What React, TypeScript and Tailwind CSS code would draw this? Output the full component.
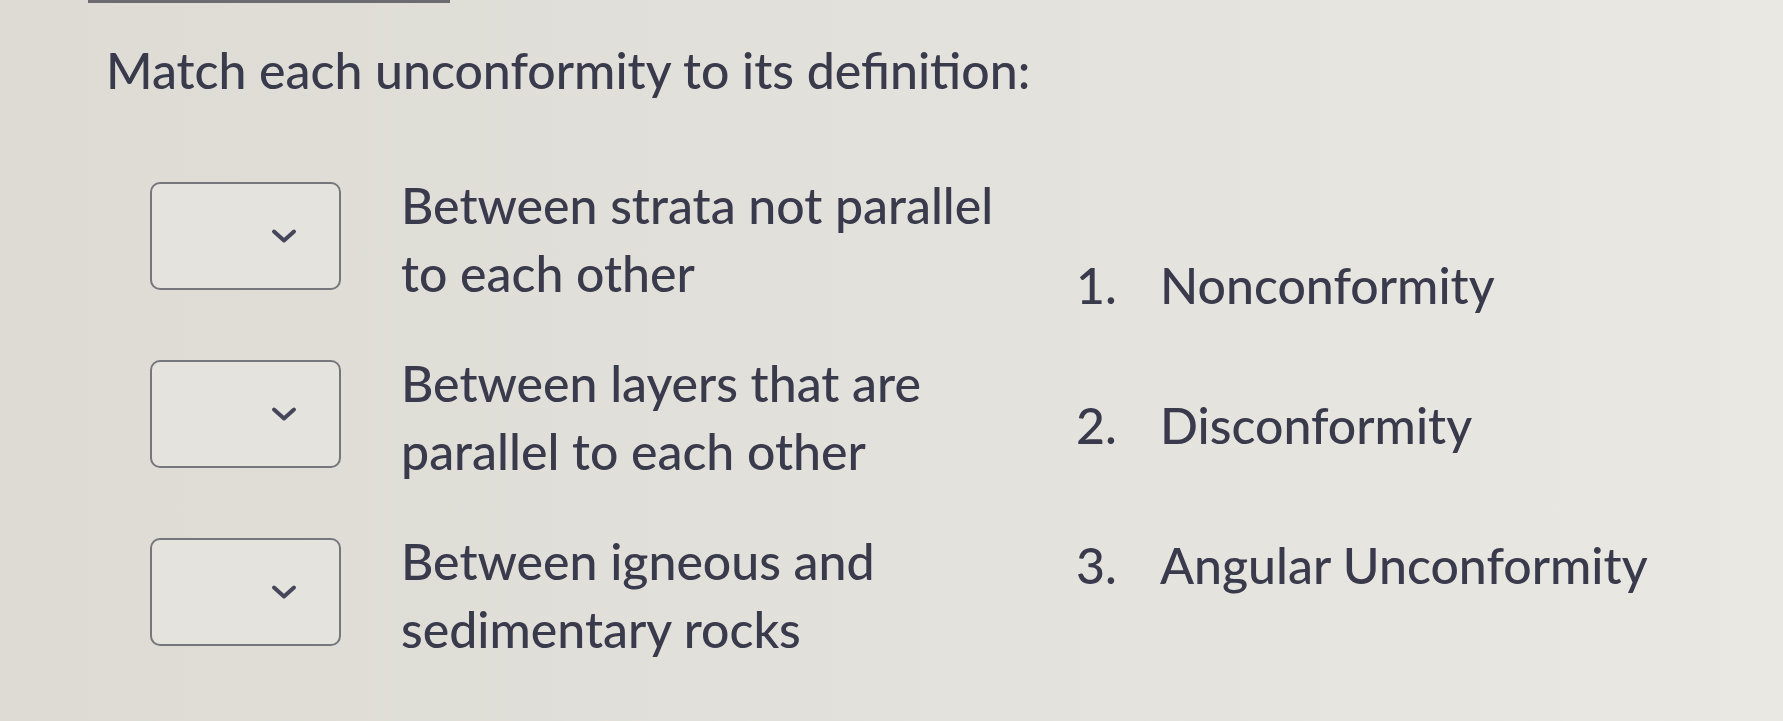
import React from "react";

const rows = [
  ["Between strata not parallel", "to each other"],
  ["Between layers that are", "parallel to each other"],
  ["Between igneous and", "sedimentary rocks"],
];

const terms = ["Nonconformity", "Disconformity", "Angular Unconformity"];

function Chevron() {
  return (
    <svg width="26" height="16" viewBox="0 0 26 16" fill="none">
      <path d="M3 3.5 L13 12.5 L23 3.5" stroke="#45465a" strokeWidth="4" strokeLinecap="round" strokeLinejoin="round" />
    </svg>
  );
}

function SelectBox() {
  return (
    <div className="flex h-[108px] w-[191px] shrink-0 items-center justify-end rounded-[10px] border-2 border-[#76767d] bg-[#e5e3de] pr-[42px]">
      <Chevron />
    </div>
  );
}

export default function App() {
  return (
    <div
      className="relative h-[721px] w-full overflow-hidden bg-gradient-to-r from-[#dddbd4] via-[#e3e1db] to-[#e9e8e3] text-[#393a4b]"
      style={{ fontFamily: "Lato, 'Open Sans', sans-serif" }}
    >
      <div className="absolute left-[88px] top-0 h-[3px] w-[362px] bg-[#6b6b71]" />
      <div className="pl-[106px] pt-[34px]">
        <h1 className="text-[50px] leading-[72px] font-medium">Match each unconformity to its definition:</h1>
      </div>
      <div className="mt-[59px] flex">
        <div className="flex flex-col gap-[36px] pl-[150px]">
          {rows.map((r, i) => (
            <div key={i} className="flex items-center gap-[60px]">
              <SelectBox />
              <div className="pt-[6px] text-[50px] leading-[68px] font-medium">
                <div>{r[0]}</div>
                <div>{r[1]}</div>
              </div>
            </div>
          ))}
        </div>
      </div>
      <ol className="absolute left-[1076px] top-[255px] flex flex-col gap-[80px] text-[50px] leading-[60px] font-medium">
        {terms.map((t, i) => (
          <li key={t} className="flex">
            <span className="w-[84px]">{i + 1}.</span>
            <span>{t}</span>
          </li>
        ))}
      </ol>
    </div>
  );
}
